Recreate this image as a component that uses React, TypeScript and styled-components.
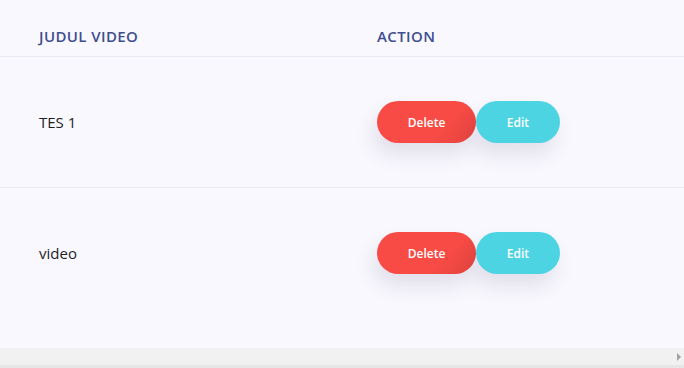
import styled, { createGlobalStyle } from "styled-components";

const GlobalStyle = createGlobalStyle`
  html, body {
    margin: 0;
    padding: 0;
    background: #f9f8fe;
    font-family: "Open Sans", "Noto Sans", sans-serif;
  }
  * {
    box-sizing: border-box;
  }
`;

const Page = styled.div`
  width: 684px;
  height: 368px;
  display: flex;
  flex-direction: column;
  overflow: hidden;
`;

const TableArea = styled.div`
  flex: 1;
  background: #f9f8fe;
`;

const Row = styled.div<{ $head?: boolean; $last?: boolean }>`
  display: grid;
  grid-template-columns: 377px 1fr;
  align-items: ${(p) => (p.$head ? "start" : "center")};
  height: ${(p) => (p.$head ? "57px" : "131px")};
  padding-top: ${(p) => (p.$head ? "26px" : "0")};
  border-bottom: 1px solid ${(p) => (p.$last ? "transparent" : "#ecebf3")};
`;

const HeadCell = styled.div<{ $first?: boolean }>`
  padding-left: ${(p) => (p.$first ? "39px" : "0")};
  font-size: 15px;
  font-weight: 600;
  letter-spacing: 0.4px;
  line-height: 20px;
  color: #414e8e;
  text-transform: uppercase;
`;

const Cell = styled.div`
  padding-left: 39px;
  font-size: 15px;
  line-height: 20px;
  color: #1e1e1e;
`;

const Actions = styled.div`
  display: flex;
  align-items: center;
`;

const Button = styled.button<{ $variant: "delete" | "edit" }>`
  height: 42px;
  width: ${(p) => (p.$variant === "delete" ? "99px" : "84px")};
  border: none;
  border-radius: 21px;
  padding: 0;
  font-family: "Open Sans", sans-serif;
  font-size: 12px;
  font-weight: 600;
  color: #ffffff;
  background: ${(p) =>
    p.$variant === "delete"
      ? "linear-gradient(135deg, #f84b45 0%, #f84b45 65%, #e4443f 100%)"
      : "#4dd4e3"};
  box-shadow: -4px 12px 20px rgba(60, 60, 100, 0.12);
  cursor: pointer;
`;

const ScrollBar = styled.div`
  height: 17px;
  background: #f1f1f1;
  display: flex;
  justify-content: flex-end;
  align-items: center;
  padding-right: 3px;
`;

const Arrow = styled.div`
  width: 0;
  height: 0;
  border-top: 4px solid transparent;
  border-bottom: 4px solid transparent;
  border-left: 4px solid #a3a3a3;
`;

const BottomEdge = styled.div`
  height: 3px;
  background: #e6e6e6;
`;

const videos = [{ title: "TES 1" }, { title: "video" }];

const App = () => {
  return (
    <>
      <GlobalStyle />
      <Page>
        <TableArea>
          <Row $head>
            <HeadCell $first>Judul Video</HeadCell>
            <HeadCell>Action</HeadCell>
          </Row>
          {videos.map((video, index) => (
            <Row key={index} $last={index === videos.length - 1}>
              <Cell>{video.title}</Cell>
              <Actions>
                <Button $variant="delete">Delete</Button>
                <Button $variant="edit">Edit</Button>
              </Actions>
            </Row>
          ))}
        </TableArea>
        <ScrollBar>
          <Arrow />
        </ScrollBar>
        <BottomEdge />
      </Page>
    </>
  );
};

export default App;
